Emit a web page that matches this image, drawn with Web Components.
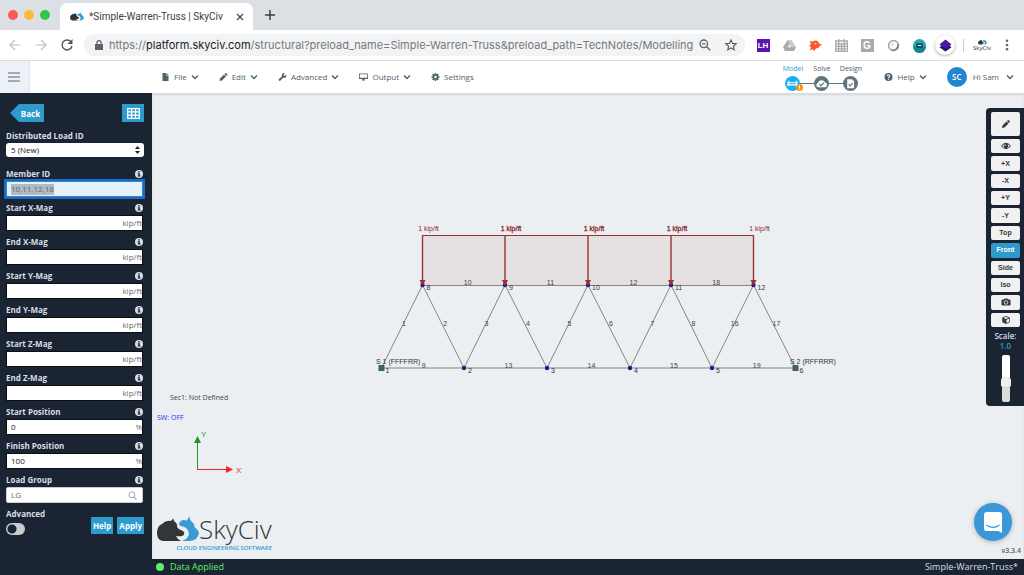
<!DOCTYPE html>
<html lang="en">
<head>
<meta charset="utf-8">
<title>*Simple-Warren-Truss | SkyCiv</title>
<style>
html, body { height: 100%; margin: 0; }
body { font-family: "Open Sans", "Noto Sans", sans-serif; font-size: 8px; overflow: hidden; }
</style>
</head>
<body>
<sky-window></sky-window>
<script>
const ICONS = {
  file: ['0 0 16 16', '<path fill="currentColor" d="M2 0h7v5h5v11H2zM10 0l4 4h-4z"/>'],
  pencil: ['0 0 16 16', '<path fill="currentColor" d="M0 16l1-5 8-8 4 4-8 8zM10 2l1.500-1.500q1-1 2 0l2 2q1 1 0 2L14 6z"/>'],
  wrench: ['0 0 16 16', '<path fill="currentColor" d="M15.700 3.500A4.500 4.500 0 0 1 9.500 9.200L4 15q-1.500 1.500-3 0t0-3l6-5.500A4.500 4.500 0 0 1 13 .6L10.500 3v2.500H13z"/>'],
  monitor: ['0 0 18 16', '<path fill="currentColor" fill-rule="evenodd" d="M1 1h16q1 0 1 1v9q0 1-1 1h-6l1 3H6l1-3H1q-1 0-1-1V2q0-1 1-1zm.5 1.500v7h15v-7z"/>'],
  gear: ['0 0 16 16', '<circle cx="8" cy="8" r="4.200" fill="none" stroke="currentColor" stroke-width="3.600"/><path stroke="currentColor" stroke-width="3" d="M8 0v3M8 13v3M0 8h3M13 8h3M2.300 2.300l2 2M11.700 11.700l2 2M13.700 2.300l-2 2M4.300 11.700l-2 2"/>'],
  down: ['0 0 16 16', '<path fill="none" stroke="currentColor" stroke-width="2.800" d="M2 5l6 6 6-6"/>'],
  help: ['0 0 16 16', '<circle cx="8" cy="8" r="8" fill="currentColor"/><path fill="none" stroke="#fff" stroke-width="2.200" d="M5.300 6q.4-2.500 2.800-2.500T10.700 6q0 1.300-1.300 2T8 10M8 11.300v2"/>'],
  info: ['0 0 16 16', '<circle cx="8" cy="8" r="8" fill="currentColor"/><path fill="#1a2433" d="M6.500 2.500h3.200v2.700H6.500zM5.500 6.500h4.200V11H11v2H5.500v-2h1.300V8.500H5.500z"/>'],
  bars: ['0 0 12 10', '<path stroke="#8b949c" stroke-width="1.400" d="M0 1h12M0 5h12M0 9h12"/>'],
  table: ['0 0 13 11', '<path fill="none" stroke="#fff" stroke-width="1.300" d="M.7.7h11.600v9.600H.7zM.7 3.900h11.600M.7 7.100h11.600M4.600.7v9.600M8.500.7v9.600"/>'],
  eye: ['0 0 18 12', '<path fill="currentColor" fill-rule="evenodd" d="M0 6q9-12 18 0-9 12-18 0zm2 0q2 3 5 3.800Q3 6 6.500 2.300 4 3 2 6zm14 0q-2-3-4.500-3.700Q15 6 11 9.800 14 9 16 6z"/><circle cx="7.500" cy="4.500" r="1.200" fill="#f1f1f1"/>'],
  camera: ['0 0 18 16', '<path fill="currentColor" d="M1.500 3H5l1-2h6l1 2h3.500Q18 3 18 4.500v9q0 1.500-1.500 1.500h-15Q0 15 0 13.500v-9Q0 3 1.500 3z"/><circle cx="9" cy="9" r="3.600" fill="none" stroke="#f1f1f1" stroke-width="1.600"/>'],
  cube: ['0 0 16 16', '<path fill="currentColor" fill-rule="evenodd" d="M8 0l7.500 3v9.500L8 16 .5 12.500V3zM8 1.700L3 3.800 8 6l5-2.200zM9 7.600v6.200l5-2.400V5.500z"/>'],
  back: ['0 0 12 12', '<path fill="none" stroke="#bcbec1" stroke-width="1.200" d="M11.500 6H1M6 1L1 6l5 5"/>'],
  forward: ['0 0 12 12', '<path fill="none" stroke="#bcbec1" stroke-width="1.200" d="M.5 6H11M6 1l5 5-5 5"/>'],
  reload: ['0 0 12 12', '<path fill="none" stroke="#53575b" stroke-width="1.400" d="M10.300 3.200A5 5 0 1 0 11 7"/><path fill="#53575b" d="M11.500 0v5h-5z"/>'],
  lock: ['0 0 8 10', '<path fill="#5f6368" d="M0 4h8v6H0z"/><path fill="none" stroke="#5f6368" stroke-width="1.200" d="M1.900 4.500V2.700a2.100 2.100 0 0 1 4.200 0v1.800"/>'],
  zoomout: ['0 0 12 12', '<circle cx="4.800" cy="4.800" r="3.800" fill="none" stroke="#5f6368" stroke-width="1.300"/><path stroke="#5f6368" stroke-width="1.300" d="M7.700 7.700l3.500 3.500M3 4.800h3.600"/>'],
  star: ['0 0 12 12', '<path fill="none" stroke="#5f6368" stroke-width="1.200" d="M6 1l1.500 3.400 3.700.3-2.800 2.500.8 3.700L6 9l-3.200 1.900.8-3.700L.8 4.700l3.700-.3z"/>'],
  search: ['0 0 10 10', '<circle cx="4.300" cy="4.300" r="3.300" fill="none" stroke="#999" stroke-width="1"/><path stroke="#999" stroke-width="1.200" d="M6.800 6.800l2.500 2.500"/>'],
  close: ['0 0 8 8', '<path stroke="#45494d" stroke-width="1.300" d="M1 1l6 6M7 1L1 7"/>'],
  plus: ['0 0 10 10', '<path stroke="#3c4043" stroke-width="1.500" d="M5 0v10M0 5h10"/>'],
  dots: ['0 0 4 12', '<g fill="#5f6368"><circle cx="2" cy="1.800" r="1.300"/><circle cx="2" cy="6" r="1.300"/><circle cx="2" cy="10.200" r="1.300"/></g>'],
  dogs: ['0 0 42 26', '<path fill="#333538" d="M0 17Q0 10 5 8q4-4 9-3l2-2.500 1.500 3Q21 8 20 11q1 2 5 3.500 3 1.500 2 4-1 2.500-8 1.500 1 3 5 5H6Q0 24 0 17z"/><path fill="#3b9bd3" d="M22 7.500q2-4 6-3.300l2 .4 2-4.100 1.500 4Q38 8 37.500 11q4 3 4.500 6-1 7-9 8h-8q6-2 7-7-.5-6-6-7.500-4-.5-4-3z"/>'],
  drive: ['0 0 14 12', '<path fill="#aaa" d="M5 0h4l5 8-2 4H2L0 8z"/><path fill="#ccc" d="M5 0h4l5 8H9.500z"/><path fill="#f4f4f4" d="M7 4.500L9 8H5z"/>'],
  bird: ['0 0 14 12', '<path fill="#fb5a2c" d="M1 1l3 1q3-3 6 0l1 2 3 1-3 2q0 2-3 2l-3 3-1-2-3 1 1-3-2-2 2-1z"/><circle cx="7" cy="4" r=".8" fill="#fff"/>'],
  calendar: ['0 0 13 13', '<path fill="none" stroke="#aaa" stroke-width="1.300" d="M.7 2h11.600v10.300H.7zM.7 4.800h11.600M.7 7.300h11.600M.7 9.800h11.600M3.700 0v12M6.500 4v8M9.300 0v12"/>'],
  ring: ['0 0 12 12', '<circle cx="6" cy="6" r="4.500" fill="#fff" stroke="#aaa" stroke-width="1.600"/><path fill="none" stroke="#888" stroke-width="1.600" d="M10 4.500a4.500 4.500 0 0 1-6 5.500"/><circle cx="5" cy="5" r="1.500" fill="#ddd"/>'],
  teal: ['0 0 12 12', '<circle cx="6" cy="6" r="6" fill="#26a9b3"/><path d="M0 7a6 6 0 0 0 12 0z" fill="#168391"/><rect x="3" y="4" width="6" height="4" rx="1" fill="#064a56"/><path fill="#fff" d="M4.500 5.500h3v1h-3z"/>'],
  layers: ['0 0 14 14', '<path fill="#25106c" d="M7 4l6.500 5L7 13.500.5 9z"/><path fill="#4b16a8" d="M7 .5L13.500 6 7 10.500.5 6z"/>'],
  bridge: ['0 0 16 16', '<circle cx="8" cy="8" r="8" fill="#1cadf3"/><path fill="none" stroke="#fff" stroke-width="1.200" d="M4 5v6M12 5v6M2 9.500h12M2 7.200h12"/>'],
  cloud: ['0 0 16 16', '<circle cx="8" cy="8" r="8" fill="#607580"/><path fill="#fff" d="M4.500 12a2.300 2.300 0 0 1-.3-4.500 4 4 0 0 1 7.400-.8 2.700 2.700 0 0 1 .2 5.300z"/><path fill="none" stroke="#607580" stroke-width="1.300" d="M5.800 8.500l1.700 1.700 2.800-3"/>'],
  report: ['0 0 16 16', '<circle cx="8" cy="8" r="8" fill="#607580"/><path fill="#fff" d="M4.500 3.500h5l2.300 2.300V13H4.500z"/><path fill="none" stroke="#607580" stroke-width="1.200" d="M6 9l1.500 1.500L10.300 7.500"/>'],
  warn: ['0 0 8 8', '<circle cx="4" cy="4" r="4" fill="#f7941e"/><path fill="#fff" d="M3.400 1.500h1.200v3H3.400zM3.400 5.300h1.200v1.200H3.400z"/>'],
  chat: ['0 0 20 22', '<path fill="#fff" d="M3 0h13Q19 0 19 3v19l-4-2H3Q0 20 0 17V3Q0 0 3 0z"/><path fill="none" stroke="#3a97d8" stroke-width="1.300" stroke-linecap="round" d="M3 14q6.500 4.500 13 0"/>']
};

function define(name, html, setup) {
  const template = document.createElement('template');
  template.innerHTML = html;
  customElements.define(name, class extends HTMLElement {
    constructor() { super(); this.attachShadow({ mode: 'open' }); }
    connectedCallback() {
      if (this.shadowRoot.childNodes.length) return;
      this.shadowRoot.append(document.importNode(template.content, true));
      if (setup) setup(this, this.shadowRoot);
    }
  });
}

define('sky-icon', `<style>
  :host { display: inline-flex; flex: none; width: 8px; height: 8px; }
  svg { width: 100%; height: 100%; display: block; overflow: visible; }
</style><svg aria-hidden="true"></svg>`, (el, root) => {
  const [box, art] = ICONS[el.getAttribute('name')];
  const svg = root.querySelector('svg');
  svg.setAttribute('viewBox', box);
  svg.innerHTML = art;
});

define('browser-tabs', `<style>
  :host { display: flex; height: 30px; background: #dcdfe4; align-items: center; box-sizing: border-box; padding-left: 8px; font: 10px/14px Roboto, Arial, sans-serif; color: #3c4043; }
  .light { width: 10px; height: 10px; border-radius: 50%; margin-right: 6px; }
  .tab { display: flex; align-items: center; align-self: flex-end; height: 27px; width: 193px; margin-left: 4px; padding: 0 9px 0 10px; box-sizing: border-box; background: #fff; border-radius: 7px 7px 0 0; }
  .fav { width: 14px; height: 9px; margin-right: 5px; }
  .title { flex: 1; white-space: nowrap; }
  button { border: 0; background: none; padding: 0; display: flex; }
  .new { margin-left: 12px; }
  .new sky-icon { width: 10px; height: 10px; }
</style>
<span class="light" style="background:#fc5b57"></span><span class="light" style="background:#fdbb3d"></span><span class="light" style="background:#33c748"></span>
<div class="tab"><sky-icon class="fav" name="dogs"></sky-icon><span class="title">*Simple-Warren-Truss | SkyCiv</span><button aria-label="Close tab"><sky-icon name="close"></sky-icon></button></div>
<button class="new" aria-label="New tab"><sky-icon name="plus"></sky-icon></button>`);

define('browser-address', `<style>
  :host { display: flex; align-items: center; height: 31px; box-sizing: border-box; padding: 0 15px 0 9px; border-bottom: 1px solid #dadce0; background: #fff; font: 11px/16px Inter, Arial, sans-serif; }
  button { border: 0; background: none; padding: 0; display: flex; font: inherit; }
  .nav { display: flex; gap: 14px; }
  .nav sky-icon, .pill button sky-icon { width: 12px; height: 12px; }
  .pill { display: flex; flex: 1; align-items: center; height: 22px; border-radius: 11px; background: #f1f3f4; margin: 0 5px 0 11px; padding: 0 8px 0 11px; min-width: 0; }
  .pill button + button { margin-left: 14px; }
  .lock { height: 10px; margin-right: 6px; }
  .url { flex: 1; min-width: 0; color: #75797d; white-space: nowrap; overflow: hidden; }
  b { font-weight: 400; color: #202124; }
  .ext { display: flex; align-items: center; }
  .ext > * { width: 26px; height: 22px; display: flex; justify-content: center; align-items: center; }
  .ext sky-icon { width: 13px; height: 13px; }
  .sq { font: bold 8px/13px "Liberation Sans", Arial, sans-serif; color: #fff; background: #5a14b4; width: 13px; height: 13px; text-align: center; }
  .sq.g { background: #aaa; font-size: 10px; }
  .on { width: 20px; height: 20px; border-radius: 50%; box-shadow: 0 1px 3px #0005; display: flex; align-items: center; justify-content: center; }
  .rule { width: 1px; height: 13px; background: #c8cacd; margin: 0 9px 0 5px; }
  .ext > .sky { width: 18px; flex-direction: column; font: 6px/6px "Noto Sans", sans-serif; color: #444; margin-right: 14px; }
  .sky sky-icon { width: 9px; height: 6px; }
  .ext > .dots { width: 4px; }
  .dots sky-icon { width: 4px; height: 12px; }
</style>
<div class="nav"><button aria-label="Back"><sky-icon name="back"></sky-icon></button><button aria-label="Forward"><sky-icon name="forward"></sky-icon></button><button aria-label="Reload"><sky-icon name="reload"></sky-icon></button></div>
<div class="pill"><sky-icon class="lock" name="lock"></sky-icon><span class="url">https://<b>platform.skyciv.com</b>/structural?preload_name=Simple-Warren-Truss&amp;preload_path=TechNotes/Modelling</span><button aria-label="Zoom"><sky-icon name="zoomout"></sky-icon></button><button aria-label="Bookmark"><sky-icon name="star"></sky-icon></button></div>
<div class="ext"><button><span class="sq">LH</span></button><button aria-label="Drive"><sky-icon name="drive"></sky-icon></button><button aria-label="Bird"><sky-icon name="bird"></sky-icon></button><button aria-label="Calendar"><sky-icon name="calendar"></sky-icon></button><button><span class="sq g">G</span></button><button aria-label="Ring"><sky-icon name="ring"></sky-icon></button><button aria-label="Capture"><sky-icon name="teal"></sky-icon></button><button aria-label="Layers"><span class="on"><sky-icon name="layers"></sky-icon></span></button></div>
<span class="rule"></span>
<div class="ext"><button class="sky"><sky-icon name="dogs"></sky-icon>SkyCiv</button><button class="dots" aria-label="Menu"><sky-icon name="dots"></sky-icon></button></div>`);

define('menu-item', `<style>
  :host { display: block; }
  button { display: flex; align-items: center; gap: 4px; border: 0; padding: 0; background: none; color: #4f6169; font: 500 8px/12px "Open Sans", sans-serif; white-space: nowrap; }
  .lead { width: 9px; }
</style><button><slot></slot></button>`, (el, root) => {
  const icon = (name, cls) => {
    const node = document.createElement('sky-icon');
    node.setAttribute('name', name);
    node.className = cls;
    return node;
  };
  const button = root.querySelector('button');
  button.prepend(icon(el.getAttribute('icon'), 'lead'));
  if (el.hasAttribute('more')) button.append(icon('down', 'more'));
});

define('stage-steps', `<style>
  :host { display: flex; color: #4f6169; font: 7px/10px "Open Sans", sans-serif; }
  a { position: relative; width: 29px; display: flex; flex-direction: column; align-items: center; gap: 2px; color: inherit; text-decoration: none; }
  a + a::before { content: ""; position: absolute; width: 14px; height: 1px; background: #607580; top: 19px; left: -7px; }
  a > sky-icon { width: 15px; height: 15px; }
  a > .warn { position: absolute; width: 7px; height: 7px; right: 4px; bottom: 0; }
  .now { color: #1e9bd0; }
</style>
<a class="now" href="#model">Model<sky-icon name="bridge"></sky-icon><sky-icon class="warn" name="warn"></sky-icon></a><a href="#solve">Solve<sky-icon name="cloud"></sky-icon></a><a href="#design">Design<sky-icon name="report"></sky-icon></a>`);

define('app-header', `<style>
  :host { display: flex; align-items: center; height: 32px; background: #fff; color: #4f6169; }
  .burger { width: 30px; height: 32px; border: 0; border-right: 1px solid #dfe5ea; padding: 0 2px 0 0; background: #ebf1f6; display: flex; align-items: center; justify-content: center; margin-right: 131px; }
  .burger sky-icon { width: 12px; height: 10px; }
  nav { display: flex; gap: 20px; flex: 1; }
  stage-steps { margin-right: 19px; }
  .user { display: flex; align-items: center; margin: 0 10px 0 20px; border: 0; background: none; padding: 0; color: inherit; font: 500 8px/12px "Open Sans", sans-serif; }
  .user sky-icon { margin-left: 7px; }
  .face { width: 20px; height: 20px; border-radius: 50%; background: #2185d0; color: #fff; font: 600 8px/20px "Open Sans", sans-serif; text-align: center; margin-right: 6px; }
</style>
<button class="burger" aria-label="Menu"><sky-icon name="bars"></sky-icon></button>
<nav><menu-item icon="file" more>File</menu-item><menu-item icon="pencil" more>Edit</menu-item><menu-item icon="wrench" more>Advanced</menu-item><menu-item icon="monitor" more>Output</menu-item><menu-item icon="gear">Settings</menu-item></nav>
<stage-steps></stage-steps>
<menu-item icon="help" more>Help</menu-item>
<button class="user"><span class="face">SC</span>Hi Sam<sky-icon name="down"></sky-icon></button>`);

define('load-field', `<style>
  :host { display: block; color: #d9dee3; }
  .head { display: flex; align-items: center; justify-content: space-between; height: 14px; font: 700 8px/14px "Open Sans", sans-serif; }
  .box { display: flex; align-items: center; height: 16px; box-sizing: border-box; background: #fff; border: 1px solid #0a0f16; color: #666; font: 8px/14px "Open Sans", sans-serif; }
  input { flex: 1; min-width: 0; border: 0; padding: 0 4px; margin: 0; background: none; outline: 0; color: #111; font: 8px/14px "Open Sans", sans-serif; }
  :host([active]) .box { background: #e3f1fd; border-color: #2f84d8; box-shadow: 0 0 0 2px #1b6bc0; }
  :host([active]) .box input { flex: none; field-sizing: content; color: #57636c; background: #b1bbc3; height: 11px; padding: 0; margin-left: 4px; }
  :host([soft]) .box { border-color: #ccd; border-radius: 2px; padding-right: 5px; }
  :host([soft]) input { color: #666; }
</style>
<div class="head"><label for="f"></label><sky-icon name="info"></sky-icon></div>
<div class="box"><input id="f"><span class="unit"></span><slot></slot></div>`, (el, root) => {
  root.querySelector('label').textContent = el.getAttribute('label');
  root.querySelector('input').value = el.getAttribute('value') || '';
  root.querySelector('.unit').textContent = el.getAttribute('unit') || '';
});

define('load-panel', `<style>
  :host { display: flex; flex-direction: column; box-sizing: border-box; background: #1a2433; padding: 11px 8px 0 6px; gap: 4px; color: #d9dee3; font: 700 8px/14px "Open Sans", sans-serif; }
  .top, .foot { display: flex; justify-content: space-between; }
  .top { margin-bottom: 3px; }
  load-field { margin-right: 1px; }
  button { border: 0; padding: 0; background: #2d9bcb; color: #fff; font: 700 8px/17px "Open Sans", sans-serif; }
  .back { width: 34px; height: 18px; margin-left: 4px; padding-left: 7px; clip-path: polygon(0 50%, 9px 0, 100% 0, 100% 100%, 9px 100%); }
  .grid { width: 22px; height: 18px; display: flex; align-items: center; justify-content: center; }
  .grid sky-icon { width: 13px; height: 11px; }
  .pick { display: flex; flex-direction: column; margin-bottom: 6px; position: relative; }
  select { appearance: none; height: 14px; border: 0; border-radius: 3px; padding: 0 5px; background: #fff; color: #111; font: 8px/14px "Open Sans", sans-serif; }
  .arrows { position: absolute; right: 4px; bottom: 3px; width: 5px; height: 8px; pointer-events: none; }
  .search { width: 9px; height: 9px; }
  .adv { display: flex; flex-direction: column; gap: 2px; }
  input { appearance: none; width: 19px; height: 12px; margin: 0; border-radius: 6px; background: radial-gradient(circle at 6px 6px, #1a2433 4px, #c9cccf 5px); }
  .act { display: flex; gap: 4px; padding-top: 10px; }
  .act button { height: 17px; padding: 0 2px; }
</style>
<div class="top"><button class="back">Back</button><button class="grid" aria-label="Open table"><sky-icon name="table"></sky-icon></button></div>
<div class="pick"><label for="id">Distributed Load ID</label><select id="id"><option>5 (New)</option></select><svg class="arrows" viewBox="0 0 5 8"><path d="M0 3L2.500 0 5 3zM0 5h5L2.500 8z" fill="#222"/></svg></div>
<load-field label="Member ID" value="10,11,12,18" active></load-field>
<load-field label="Start X-Mag" unit="kip/ft"></load-field>
<load-field label="End X-Mag" unit="kip/ft"></load-field>
<load-field label="Start Y-Mag" unit="kip/ft"></load-field>
<load-field label="End Y-Mag" unit="kip/ft"></load-field>
<load-field label="Start Z-Mag" unit="kip/ft"></load-field>
<load-field label="End Z-Mag" unit="kip/ft"></load-field>
<load-field label="Start Position" value="0" unit="%"></load-field>
<load-field label="Finish Position" value="100" unit="%"></load-field>
<load-field label="Load Group" value="LG" soft><sky-icon class="search" name="search"></sky-icon></load-field>
<div class="foot"><div class="adv"><label for="adv">Advanced</label><input id="adv" type="checkbox" role="switch"></div><div class="act"><button>Help</button><button>Apply</button></div></div>`);

define('truss-model', `<style>
  :host { display: block; }
  svg { width: 100%; height: 100%; display: block; }
  text { font: 7px "Liberation Sans", Arial, sans-serif; fill: #333; }
  .load text { fill: #8e2a30; text-anchor: middle; }
  .load .twice { stroke: #8e2a30; stroke-width: .3; }
  .member text { text-anchor: middle; fill: #444; }
</style><svg viewBox="152 93 872 466" role="img" aria-label="Warren truss"><rect x="422" y="235" width="331" height="50" fill="#e4dfe1"/><g class="member" stroke-width="1"></g><g class="joint"></g><g class="load"></g></svg>`, (el, root) => {
  const top = [[422.5, 8], [505, 9], [588, 10], [671, 11], [753.5, 12]];
  const bottom = [[381.5, 1], [464, 2], [547, 3], [630, 4], [712, 5], [795.5, 6]];
  const HI = 285, LO = 368, line = (a, b, c, d) => `<path d="M${a} ${b}L${c} ${d}" stroke="#858585"/>`;
  let members = '', joints = '', loads = '';
  const label = (x, y, t, cls = '') => `<text class="${cls}" x="${x}" y="${y}" stroke-width="0">${t}</text>`;
  [10, 11, 12, 18].forEach((n, i) => {
    members += line(top[i][0], HI + .5, top[i + 1][0], HI + .5) + label((top[i][0] + top[i + 1][0]) / 2 + 4, 285, n);
  });
  [9, 13, 14, 15, 19].forEach((n, i) => {
    members += line(bottom[i][0], LO, bottom[i + 1][0], LO) + label((bottom[i][0] + bottom[i + 1][0]) / 2 + (i ? 3 : 1), 368, n);
  });
  [[1, 2], [3, 4], [5, 6], [7, 8], [16, 17]].forEach((pair, i) => {
    members += line(bottom[i][0], LO, top[i][0], HI) + line(top[i][0], HI, bottom[i + 1][0], LO);
    members += label((bottom[i][0] + top[i][0]) / 2 + 2, 326, pair[0]) + label((bottom[i + 1][0] + top[i][0]) / 2 + 2, 326, pair[1]);
  });
  top.forEach(([x, n], i) => {
    joints += `<circle cx="${x}" cy="${HI}" r="2.200" fill="#1c1c8c"/>` + label(x + 4, 290, n);
    loads += `<path d="M${x} 235.500V284" stroke="#963238" stroke-width="1.400"/><path d="M${x - 3} 280h6l-3 6z" fill="#a02c32"/>` + label(x + 6, 231, '1 kip/ft', i % 4 ? 'twice' : '');
  });
  loads += '<path d="M422 235.500H754" stroke="#963238"/>';
  bottom.forEach(([x, n], i) => {
    joints += i % 5 ? `<circle cx="${x}" cy="${LO}" r="2.200" fill="#1c1c8c"/>` : `<path d="M${x - 3} ${LO - 3}h6v6h-6z" fill="#3e6552"/>`;
    joints += label(x + 4, 373, n);
  });
  joints += label(376, 364, 'S 1 (FFFFRR)') + label(790, 364, 'S 2 (RFFRRR)');
  root.querySelector('.member').innerHTML = members;
  root.querySelector('.joint').innerHTML = joints;
  root.querySelector('.load').innerHTML = loads;
});

define('view-tools', `<style>
  :host { display: flex; flex-direction: column; align-items: center; box-sizing: border-box; width: 38px; padding: 4px 4px 4px 5px; background: #1a2433; border-radius: 4px 0 0 4px; color: #d9dee3; font: 600 8px/10px "Open Sans", sans-serif; }
  .views { display: grid; grid-auto-rows: 1fr; width: 100%; height: 188px; gap: 3px; margin: 3px 0 4px; }
  button { width: 29px; border: 0; border-radius: 2px; padding: 0; background: #f1f1f1; color: #333b42; font: 700 7px/14px "Liberation Sans", Arial, sans-serif; display: flex; align-items: center; justify-content: center; }
  .edit { height: 24px; }
  .on { background: #2d9bcb; color: #fff; }
  .wide { width: 10px; }
  output { color: #2d9bcb; }
  input { writing-mode: vertical-lr; direction: rtl; appearance: none; width: 8px; height: 47px; margin: 4px 0 0; border-radius: 2px; background: linear-gradient(#fff 50%, #dcdcdc 50%); }
  input::-webkit-slider-thumb { appearance: none; width: 10px; height: 9px; border-radius: 2px; background: #eee; box-shadow: 0 0 1px #555; }
</style>
<button class="edit" aria-label="Edit"><sky-icon name="pencil"></sky-icon></button>
<div class="views"><button aria-label="Visibility"><sky-icon class="wide" name="eye"></sky-icon></button><button>+X</button><button>-X</button><button>+Y</button><button>-Y</button><button>Top</button><button class="on">Front</button><button>Side</button><button>Iso</button><button aria-label="Screenshot"><sky-icon class="wide" name="camera"></sky-icon></button><button aria-label="Render"><sky-icon name="cube"></sky-icon></button></div>
<label for="scale">Scale:</label><output for="scale">1.0</output><input id="scale" type="range" min="0" max="100" value="40">`);

define('sky-logo', `<style>
  :host { display: grid; grid-template-columns: 42px auto; align-items: center; width: 115px; }
  .dogs { width: 42px; height: 26px; }
  .name { font: 300 26px/26px "Open Sans", sans-serif; color: #333538; white-space: nowrap; }
  .tag { grid-column: 1 / 3; justify-self: end; font: 600 6px/8px "Open Sans", sans-serif; color: #2f9bcf; white-space: nowrap; margin-top: 2px; }
</style><sky-icon class="dogs" name="dogs"></sky-icon><span class="name">SkyCiv</span><span class="tag">CLOUD ENGINEERING SOFTWARE</span>`);

define('model-space', `<style>
  :host { display: block; position: relative; overflow: hidden; background: #ebeff2; box-shadow: inset 0 2px 3px #0000001a; font: 7px/10px "Open Sans", sans-serif; min-height: 0; }
  truss-model { position: absolute; inset: 0; }
  .notes { position: absolute; left: 5px; bottom: 80px; display: flex; flex-direction: column; }
  .sec { margin: 0 0 10px 13px; color: #444; }
  .sw { color: #2430f0; margin-bottom: 8px; }
  .axes { width: 56px; height: 48px; margin-left: 36px; overflow: visible; }
  .axes text { font: 8px "Liberation Sans", Arial, sans-serif; }
  sky-logo { position: absolute; left: 5px; bottom: 7px; }
  view-tools { position: absolute; right: 0; top: 15px; }
  .chat { position: absolute; right: 12px; bottom: 18px; width: 38px; height: 38px; border: 0; padding: 0; border-radius: 50%; background: #3a97d8; box-shadow: 0 1px 5px #0004; display: flex; align-items: center; justify-content: center; }
  .chat sky-icon { width: 19px; height: 21px; }
  .ver { position: absolute; right: 3px; bottom: 3px; font-weight: 600; color: #4f6169; }
</style>
<truss-model></truss-model>
<div class="notes"><span class="sec">Sec1: Not Defined</span><span class="sw">SW: OFF</span>
<svg class="axes" viewBox="0 0 56 48" role="img" aria-label="Axes"><path d="M4.500 12V39" stroke="#169a26"/><path d="M1 12h7L4.500 5z" fill="#169a26"/><path d="M4 38.500H34" stroke="#f5202c"/><path d="M33 35v7l7-3.500z" fill="#f5202c"/><text x="8" y="6" fill="#169a26">Y</text><text x="43" y="42" fill="#f5202c">X</text></svg></div>
<sky-logo></sky-logo>
<view-tools></view-tools>
<button class="chat" aria-label="Chat"><sky-icon name="chat"></sky-icon></button>
<span class="ver">v3.3.4</span>`);

define('status-bar', `<style>
  :host { display: flex; align-items: center; height: 16px; padding: 0 6px 0 4px; background: #1a2433; color: #d9dee3; font: 9px/16px "Open Sans", sans-serif; }
  .dot { width: 8px; height: 8px; border-radius: 50%; background: #5df068; margin-right: 6px; }
  .msg { flex: 1; color: #5df068; }
</style><span class="dot"></span><span class="msg">Data Applied</span><span>Simple-Warren-Truss*</span>`);

define('sky-window', `<style>
  :host { display: grid; height: 100vh; grid-template: auto auto auto minmax(0, 1fr) auto / 152px minmax(0, 1fr); }
  browser-tabs, browser-address, app-header { grid-column: 1 / 3; }
  load-panel { grid-row: 4 / 6; }
</style><browser-tabs></browser-tabs><browser-address></browser-address><app-header></app-header><load-panel></load-panel><model-space></model-space><status-bar></status-bar>`);
</script>
</body>
</html>
